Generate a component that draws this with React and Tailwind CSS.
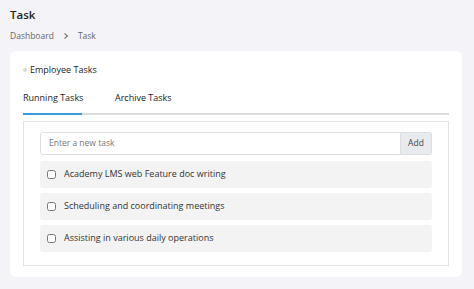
import { useState } from 'react'

const font = { fontFamily: '"Open Sans", "Noto Sans", sans-serif' }

export default function App() {
  const [tab, setTab] = useState('running')
  const [tasks] = useState([
    'Academy LMS web Feature doc writing',
    'Scheduling and coordinating meetings',
    'Assisting in various daily operations',
  ])

  return (
    <div className="w-[474px] h-[289px] bg-[#f4f4f8] text-[#333] overflow-hidden" style={font}>
      {/* Header */}
      <div className="px-[10px] pt-[7px]">
        <h1 className="text-[11.5px] font-semibold leading-[16px] text-[#222]">Task</h1>
        <div className="mt-[7px] flex items-center gap-[9px] text-[8.5px] leading-[12px] text-[#666]">
          <span>Dashboard</span>
          <svg width="6" height="8" viewBox="0 0 6 8" fill="none" stroke="#777" strokeWidth="1.1">
            <path d="M1.5 1.5 L4.5 4 L1.5 6.5" />
          </svg>
          <span>Task</span>
        </div>
      </div>

      {/* Card */}
      <div className="mx-[10px] mt-[9px] w-[452px] h-[226px] bg-white rounded-[6px] px-[13px] pt-[13px]">
        <div className="flex items-center gap-[3px] text-[9px] leading-[12px] text-[#222]">
          <span className="w-[4px] h-[4px] rounded-full bg-[#d8d8d8]"></span>
          <span>Employee Tasks</span>
        </div>

        {/* Tabs */}
        <div className="mt-[16px] flex border-b-[2px] border-[#dcdcdc]">
          <button
            onClick={() => setTab('running')}
            className={`w-[59px] whitespace-nowrap text-left text-[9px] leading-[12px] pb-[9px] -mb-[2px] border-b-[2px] text-[#222] ${tab === 'running' ? 'border-[#3a9ae0]' : 'border-transparent'}`}
          >
            Running Tasks
          </button>
          <button
            onClick={() => setTab('archive')}
            className={`ml-[33px] whitespace-nowrap text-left text-[9px] leading-[12px] pb-[9px] -mb-[2px] border-b-[2px] text-[#222] ${tab === 'archive' ? 'border-[#3a9ae0]' : 'border-transparent'}`}
          >
            Archive Tasks
          </button>
        </div>

        {/* Task box */}
        <div className="mt-[6px] border border-[#e3e3e3] h-[145px] px-[16px] pt-[10px]">
          <div className="flex h-[23px]">
            <input
              className="flex-1 min-w-0 border border-[#dedede] rounded-l-[3px] px-[8px] text-[8.5px] text-[#333] placeholder:text-[#777] outline-none"
              placeholder="Enter a new task"
              style={font}
            />
            <button className="w-[31px] bg-[#e8ebee] border border-[#dedede] border-l-0 rounded-r-[3px] text-[8.5px] text-[#444]">
              Add
            </button>
          </div>
          <div className="mt-[6px] flex flex-col gap-[5px]">
            {tasks.map((t) => (
              <label key={t} className="h-[27px] bg-[#f3f3f3] rounded-[3px] flex items-center pl-[7px] gap-[8px] text-[9px] leading-[12px] text-[#333]">
                <input type="checkbox" className="w-[9px] h-[9px] m-0 accent-[#666]" />
                <span className="-mt-[2px]">{t}</span>
              </label>
            ))}
          </div>
        </div>
      </div>
    </div>
  )
}
